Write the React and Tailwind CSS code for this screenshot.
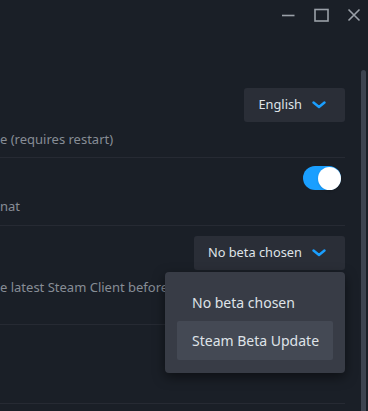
import { useState } from 'react'

function Chevron() {
  return (
    <svg width="14" height="8" viewBox="0 0 14 8" fill="none" className="shrink-0">
      <path d="M1.5 1.5 L7 6 L12.5 1.5" stroke="#1a9fff" strokeWidth="2.4" strokeLinecap="round" strokeLinejoin="round" />
    </svg>
  )
}

function Dropdown({ label }) {
  return (
    <button className="h-[34px] flex items-center gap-[10px] pl-[14px] pr-[19px] rounded-[3px] bg-[#2a2e37] text-[12.8px] text-[#dfe3e8]">
      <span>{label}</span>
      <Chevron />
    </button>
  )
}

export default function App() {
  const [clock24, setClock24] = useState(true)

  return (
    <div className="relative w-[368px] h-[411px] overflow-hidden bg-[#1a1f27] font-['Noto_Sans',sans-serif]">
      {/* Window controls */}
      <div className="h-[30px] flex items-center justify-end gap-[18px] pr-[7px]">
        <svg width="14" height="14" viewBox="0 0 14 14" className="mr-[1px] ml-[1px]">
          <path d="M1 7.5 H13.5" stroke="#9aa0a8" strokeWidth="1.6" />
        </svg>
        <svg width="15" height="14" viewBox="0 0 15 14">
          <rect x="1" y="1.5" width="13" height="11.5" stroke="#9aa0a8" strokeWidth="1.6" fill="none" />
        </svg>
        <svg width="14" height="14" viewBox="0 0 14 14">
          <path d="M1.5 1.5 L12.5 12.5 M12.5 1.5 L1.5 12.5" stroke="#9aa0a8" strokeWidth="1.6" />
        </svg>
      </div>

      <div className="flex">
        {/* Settings list */}
        <div className="w-[345px]">
          <div className="pt-[58px] pb-[9px] border-b border-[#262a33]">
            <div className="flex justify-end">
              <Dropdown label="English" />
            </div>
            <p className="mt-[8px] text-[13px] leading-[18px] text-[#878d96] whitespace-nowrap">
              e (requires restart)
            </p>
          </div>

          <div className="pt-[8px] pb-[10px] border-b border-[#262a33]">
            <div className="flex justify-end pr-[4px]">
              <button
                onClick={() => setClock24(!clock24)}
                className="w-[38px] h-[24px] rounded-full bg-[#1a9fff] flex items-center justify-end"
              >
                <span className="w-[23px] h-[23px] rounded-full bg-white shadow" />
              </button>
            </div>
            <p className="mt-[7px] text-[13px] leading-[18px] text-[#878d96] whitespace-nowrap">
              nat
            </p>
          </div>

          <div className="pt-[10px] pb-[28px] border-b border-[#262a33]">
            <div className="flex justify-end">
              <Dropdown label="No beta chosen" />
            </div>
            <p className="mt-[8px] text-[13px] leading-[18px] text-[#878d96] whitespace-nowrap">
              e latest Steam Client before it's released
            </p>
          </div>

          <div className="h-[79px] border-b border-[#262a33]" />
        </div>

        {/* Scrollbar */}
        <div className="ml-[16px] pt-[40px]">
          <div className="w-[5px] h-[400px] rounded-full bg-[#3d4450]" />
        </div>
      </div>

      {/* Open beta menu */}
      <div className="absolute left-[165px] top-[272px] w-[180px] h-[101px] rounded-[4px] bg-[#383c46] shadow-[0_4px_12px_rgba(0,0,0,0.5)] px-[12px] pt-[12px] flex flex-col text-[14px] text-[#dfe3e8]">
        <div className="h-[37px] flex items-center pl-[15px]">No beta chosen</div>
        <div className="h-[39px] flex items-center pl-[15px] bg-[#444954] rounded-[2px]">Steam Beta Update</div>
      </div>
    </div>
  )
}
